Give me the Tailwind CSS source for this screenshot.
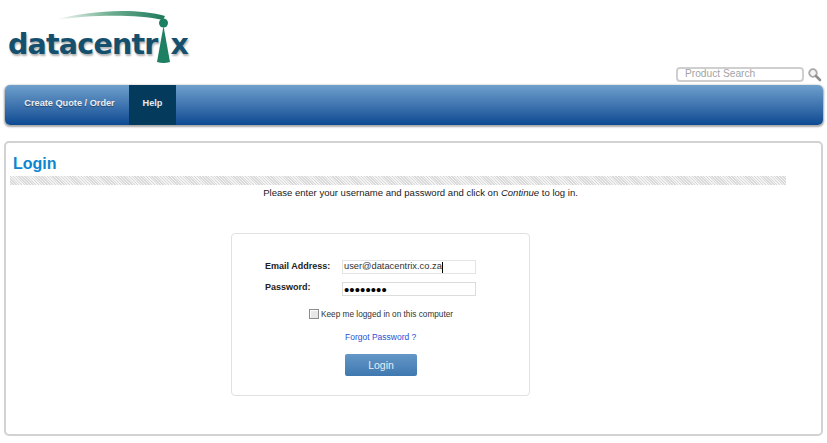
<!DOCTYPE html>
<html lang="en">
<head>
    <meta charset="UTF-8">
    <meta name="viewport" content="width=device-width, initial-scale=1.0">
    <title>Login</title>
    <script src="https://cdn.jsdelivr.net/npm/@tailwindcss/browser@4"></script>
</head>
<body class="bg-white font-['Liberation_Sans',Arial,sans-serif] overflow-hidden">
    <div class="w-[827px] h-[443px] flex flex-col">
        <!-- Logo + search -->
        <div class="h-[85px] relative shrink-0">
            <svg class="absolute left-[50px] top-[8px]" width="125" height="22" viewBox="0 0 125 22">
                <defs>
                    <linearGradient id="swoosh" x1="0" y1="0" x2="1" y2="0">
                        <stop offset="0" stop-color="#fff"/>
                        <stop offset="0.5" stop-color="#6fae90"/>
                        <stop offset="1" stop-color="#1e7a5c"/>
                    </linearGradient>
                </defs>
                <path d="M5 12 C35 3 85 -1 115 8 L113 12 C85 6 40 7 5 12 Z" fill="url(#swoosh)"/>
            </svg>
            <div class="absolute left-[8px] top-[25px] h-[40px] flex items-center font-['DejaVu_Sans',sans-serif] font-bold text-[28.5px] tracking-[-0.8px] text-[#14506e] [text-shadow:1px_2px_2px_rgba(0,0,0,0.3)] leading-none">
                <span>datacentr</span><span class="relative w-[13px] text-center text-transparent [text-shadow:none]">i
                    <svg class="absolute left-0 top-[-13px]" width="13" height="46" viewBox="0 0 13 46">
                        <circle cx="6.5" cy="5" r="4.5" fill="#1e7f63"/>
                        <path d="M6.5 8 L13 44 Q6.5 46 0 44 Z" fill="#1e7f63"/>
                    </svg></span><span>x</span>
            </div>
            <div class="absolute left-[676px] top-[67px] flex items-center gap-[4px]">
                <div class="w-[128px] h-[15px] rounded-[4px] border-2 border-[#cfcfcf] bg-white pl-[7px] flex items-center text-[10.2px] leading-none text-[#a3a3a3]">Product Search</div>
                <svg width="14" height="14" viewBox="0 0 14 14" fill="none">
                    <circle cx="5" cy="5" r="3.8" fill="#f4f4f4" stroke="#a9a9a9" stroke-width="1.8"/>
                    <path d="M8 8 L12 12" stroke="#8f8f8f" stroke-width="2.6" stroke-linecap="round"/>
                </svg>
            </div>
        </div>

        <!-- Nav -->
        <nav class="mx-[5px] w-[818px] h-[40px] shrink-0 rounded-[5px] flex pl-[5px] bg-gradient-to-b from-[#6fa0cc] to-[#0a4a92] shadow-[0_1px_2px_1px_rgba(0,0,0,0.35)]">
            <a class="w-[119px] pb-[3px] flex items-center justify-center text-white/90 text-[9.2px] font-bold [text-shadow:0_1px_1px_rgba(0,0,0,0.4)]">Create Quote / Order</a>
            <a class="w-[47px] pb-[3px] flex items-center justify-center bg-[#043a5c] text-white/90 text-[9.2px] font-bold">Help</a>
        </nav>

        <!-- Main card -->
        <main class="mt-[16px] mx-[4px] w-[819px] h-[295px] shrink-0 rounded-[5px] border-2 border-[#d2d2d2] bg-white pt-[11px] flex flex-col">
            <h1 class="ml-[7px] text-[#0d85cf] text-[16px] leading-[20px] font-bold">Login</h1>
            <div class="ml-[4px] mt-[2px] w-[776px] h-[9px] bg-[repeating-linear-gradient(45deg,#dadada_0,#dadada_1px,#f2f2f2_1px,#f2f2f2_2px)]"></div>
            <p class="mt-[1px] w-[829px] text-center text-[9.55px] leading-[14px] text-[#1a1a1a]">Please enter your username and password and click on <em>Continue</em> to log in.</p>

            <!-- Login box -->
            <div class="mt-[33px] ml-[225px] w-[299px] h-[163px] rounded-[4px] border border-[#e1e1e1] flex flex-col">
                <div class="mt-[26px] flex items-center h-[14px]">
                    <label class="ml-[33px] w-[77px] text-[9px] font-bold text-[#222] -mt-[1px]">Email Address:</label>
                    <div class="w-[134px] h-[14px] border border-[#e4e4e4] pl-[1px] flex items-center text-[9.3px] text-[#333]">user@datacentrix.co.za<span class="w-px h-[11px] bg-black"></span></div>
                </div>
                <div class="mt-[8px] flex items-center h-[14px]">
                    <label class="ml-[33px] w-[77px] text-[9px] font-bold text-[#222] -mt-[3px]">Password:</label>
                    <div class="w-[134px] h-[14px] border border-[#dcdcdc] pl-[1px] flex items-center text-[15px] leading-none text-black tracking-[0.1px]">••••••••</div>
                </div>
                <div class="mt-[13px] ml-[77px] flex items-center">
                    <span class="w-[10px] h-[10px] border border-[#8c8c8c] bg-[#e8e8e8] shadow-[inset_1px_1px_1px_#fff] -mt-[3px]"></span>
                    <span class="ml-[2px] text-[8.25px] text-[#333]">Keep me logged in on this computer</span>
                </div>
                <a class="mt-[11px] ml-[113px] text-[8.5px] leading-[11px] text-[#2a50d0]">Forgot Password ?</a>
                <div class="mt-[11px] ml-[113px] w-[72px] h-[22px] rounded-[2px] bg-gradient-to-b from-[#6497c6] to-[#3f78b0] flex items-center justify-center text-[10.5px] text-[#e8eef5]">Login</div>
            </div>
        </main>
    </div>
</body>
</html>
